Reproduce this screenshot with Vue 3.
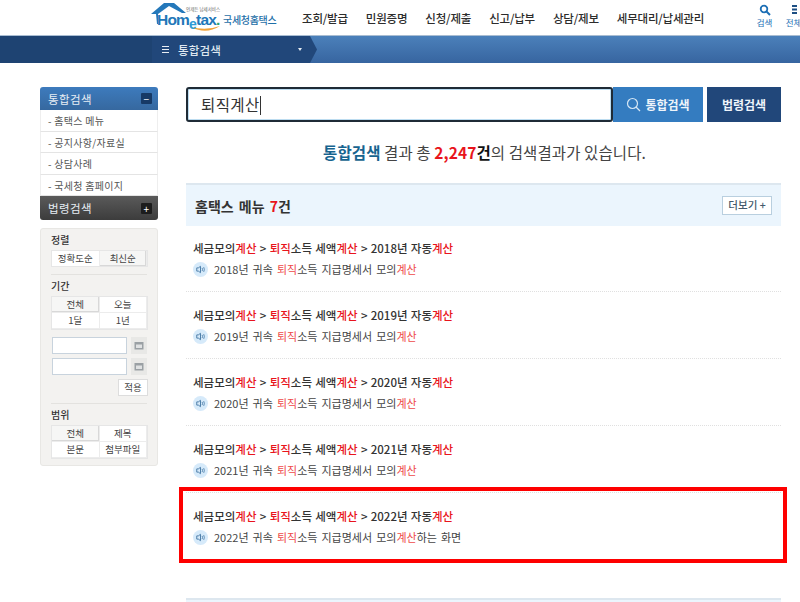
<script setup>
const years = [
  { y: '2018', tail: '' },
  { y: '2019', tail: '' },
  { y: '2020', tail: '' },
  { y: '2021', tail: '' },
  { y: '2022', tail: '하는 화면' }
]
const navs = ['조회/발급', '민원증명', '신청/제출', '신고/납부', '상담/제보', '세무대리/납세관리']
const links = ['- 홈택스 메뉴', '- 공지사항/자료실', '- 상담사례', '- 국세청 홈페이지']
</script>

<template>
  <div class="page">
    <header class="top">
      <div class="logo">
        <svg class="logo-mark" width="94" height="32" viewBox="0 0 94 32">
          <path d="M-1 12 L12 1 L22 1 L34 11 L30 11 L17 4 L6 12 L6 22 L5 22 L4 12 Z" fill="#2478ba" />
          <path d="M39 25 Q54 33 68 24 Q54 29 39 25Z" fill="#f2a33a" />
        </svg>
        <span class="logo-small">언제든 납세서비스</span>
        <span class="logo-word">Hom<i>e</i>tax<b>.</b></span>
        <span class="logo-kr">국세청홈택스</span>
      </div>
      <nav class="gnb">
        <span v-for="n in navs" :key="n">{{ n }}</span>
      </nav>
      <div class="tools">
        <div class="tool">
          <svg width="12" height="12" viewBox="0 0 12 12"><circle cx="5" cy="5" r="3.3" fill="none" stroke="#1d6fb5" stroke-width="1.8" /><path d="M7.5 7.5L11 11" stroke="#1d6fb5" stroke-width="2" /></svg>
          <span>검색</span>
        </div>
        <div class="tool">
          <svg width="12" height="12" viewBox="0 0 12 12"><path d="M4 2h5M4 5.5h5M4 9h5" stroke="#1d4f83" stroke-width="2" /></svg>
          <span>전체</span>
        </div>
      </div>
    </header>

    <div class="bar">
      <div class="crumb">
        <span class="burger"><i></i><i></i><i></i></span>
        <span class="crumb-text">통합검색</span>
        <span class="caret"></span>
      </div>
      <svg class="chevron" width="8" height="27" viewBox="0 0 8 27"><path d="M0 0L7 13.5L0 27Z" fill="#21477a" /></svg>
    </div>

    <div class="body">
      <aside class="side">
        <div class="side-head blue">통합검색<span class="toggle navy">−</span></div>
        <a v-for="l in links" :key="l" class="side-link">{{ l }}</a>
        <div class="side-head dark">법령검색<span class="toggle black">+</span></div>

        <div class="filter">
          <h4>정렬</h4>
          <div class="seg two">
            <span>정확도순</span><span class="on">최신순</span>
          </div>
          <hr />
          <h4>기간</h4>
          <div class="seg">
            <span class="on">전체</span><span>오늘</span><span>1달</span><span>1년</span>
          </div>
          <div class="dates">
            <div class="date-row"><span class="date"></span><span class="cal"><svg width="10" height="9" viewBox="0 0 10 9"><rect x="0.5" y="1" width="9" height="7.5" fill="#9aa0a4" /><rect x="2" y="3.5" width="6" height="3.5" fill="#dfe1e2" /></svg></span></div>
            <div class="date-row"><span class="date"></span><span class="cal"><svg width="10" height="9" viewBox="0 0 10 9"><rect x="0.5" y="1" width="9" height="7.5" fill="#9aa0a4" /><rect x="2" y="3.5" width="6" height="3.5" fill="#dfe1e2" /></svg></span></div>
            <div class="apply-row"><span class="apply">적용</span></div>
          </div>
          <hr />
          <h4>범위</h4>
          <div class="seg">
            <span class="on">전체</span><span>제목</span><span>본문</span><span>첨부파일</span>
          </div>
        </div>
      </aside>

      <main class="main">
        <div class="search">
          <div class="input">퇴직계산<i class="cursor"></i></div>
          <button class="btn blue-btn">
            <svg width="15" height="15" viewBox="0 0 15 15"><circle cx="6.5" cy="6.5" r="5" fill="none" stroke="#d5e6f4" stroke-width="1.2" /><path d="M10 10L14 14" stroke="#d5e6f4" stroke-width="1.2" /></svg>
            통합검색
          </button>
          <button class="btn navy-btn">법령검색</button>
        </div>

        <p class="summary"><b class="teal">통합검색</b> 결과 총 <b class="red">2,247</b><b>건</b>의 검색결과가 있습니다.</p>

        <div class="sec-head">
          <span>홈택스 메뉴 <em>7</em>건</span>
          <span class="more">더보기 +</span>
        </div>

        <div v-for="(r, i) in years" :key="r.y" class="row" :class="{ first: i === 0, marked: i === 4 }">
          <div class="title">세금모의<em>계산</em> &gt; <em>퇴직</em>소득 세액<em>계산</em> &gt; {{ r.y }}년 자동<em>계산</em></div>
          <div class="sub">
            <svg class="speaker" width="15" height="15" viewBox="0 0 14 14"><circle cx="7" cy="7" r="7" fill="#d6eafa" /><path d="M3.5 5.5h1.5l2-1.5v6l-2-1.5H3.5Z" fill="none" stroke="#4a7ca8" stroke-width="0.9" /><path d="M8.5 5.5q.8 1.5 0 3M10 4.8q1.2 2.2 0 4.4" fill="none" stroke="#4a7ca8" stroke-width="0.8" /></svg>
            <span>{{ r.y }}년 귀속 <em>퇴직</em>소득 지급명세서 모의<em>계산</em>{{ r.tail }}</span>
          </div>
        </div>

        <div class="next-sec"></div>
      </main>
    </div>
  </div>
</template>

<style>
html, body { margin: 0; overflow: hidden; background: #fff; }
</style>

<style scoped>
.page {
  width: 800px;
  height: 602px;
  overflow: hidden;
  font-family: "Noto Sans CJK KR", "Noto Sans", sans-serif;
  color: #333;
}
.top {
  height: 36px;
  display: flex;
  align-items: center;
  position: relative;
}
.logo {
  position: relative;
  width: 146px;
  height: 36px;
  margin-left: 152px;
  flex: none;
}
.logo-mark { position: absolute; left: 0; top: 2px; overflow: visible; }
.logo-small {
  position: absolute; left: 34px; top: 6px;
  font-size: 4.5px; line-height: 6px; color: #666; white-space: nowrap;
}
.logo-word {
  position: absolute; left: 5px; top: 12px;
  font: 700 15.5px/16px "Liberation Sans", sans-serif;
  letter-spacing: -0.8px;
  color: #2277b8;
  white-space: nowrap;
}
.logo-word i { font-style: normal; color: #2e9bd6; font-size: 14px; position: relative; top: 4px; }
.logo-word b { color: #2fa36b; }
.logo-kr {
  position: absolute; left: 71px; top: 13px;
  font-size: 10px; line-height: 14px; font-weight: 500;
  letter-spacing: -0.3px;
  color: #1f6fa8;
  white-space: nowrap;
}
.gnb {
  display: flex;
  gap: 18px;
  margin-left: 4px;
  font-size: 11.5px;
  font-weight: 500;
  color: #2c2c2c;
  white-space: nowrap;
  letter-spacing: -0.2px;
}
.tools {
  position: absolute;
  left: 756px;
  top: 4px;
  display: flex;
  gap: 12px;
  white-space: nowrap;
}
.tool {
  width: 17px;
  display: flex;
  flex-direction: column;
  align-items: center;
  font-size: 8.5px;
  line-height: 12px;
  color: #1d6fb5;
}
.bar {
  height: 27px;
  display: flex;
  border-top: 1px solid #a9bdd2;
  margin-top: -1px;
  background: linear-gradient(#4b80ba, #3765a0);
}
.crumb {
  width: 310px;
  height: 27px;
  flex: none;
  display: flex;
  align-items: center;
  padding-left: 162px;
  box-sizing: border-box;
  background: linear-gradient(90deg, #1e4372 152px, #21477a 152px);
  color: #dfe7f0;
  font-size: 11.5px;
  font-weight: 500;
  letter-spacing: 0.2px;
}
.burger { display: flex; flex-direction: column; gap: 2px; width: 7px; margin-right: 9px; }
.burger i { height: 1px; background: #e8edf3; display: block; }
.crumb-text { flex: 1; }
.caret {
  width: 0; height: 0;
  border: 2.5px solid transparent;
  border-top: 3px solid #e4e9f0;
  border-bottom: 0;
  margin-right: 8px;
}
.chevron { flex: none; }
.body {
  display: flex;
  padding: 24px 0 0 40px;
}
.side { width: 118px; flex: none; }
.side-head {
  height: 23px;
  display: flex;
  align-items: center;
  justify-content: space-between;
  padding: 0 6px 0 8px;
  font-size: 11.5px;
  letter-spacing: 0.4px;
  color: #e6edf4;
  box-sizing: border-box;
}
.side-head.blue { background: linear-gradient(#3d7bbd, #36689f); border-radius: 3px 3px 0 0; }
.side-head.dark { background: linear-gradient(#5a5a5a, #3c3c3c); border-radius: 0 0 3px 3px; height: 24px; }
.toggle {
  width: 11px; height: 11px;
  border-radius: 1px;
  font-size: 10px;
  line-height: 11px;
  text-align: center;
  color: #fff;
}
.navy { background: #173a66; }
.black { background: #1c1c1c; }
.side-link {
  display: block;
  height: 21.5px;
  line-height: 22px;
  box-sizing: border-box;
  padding-left: 7px;
  font-size: 10px;
  color: #555;
  letter-spacing: 0.3px;
  border-bottom: 1px solid #e4e4e4;
  border-left: 1px solid #eee;
  border-right: 1px solid #eee;
}
.filter {
  margin-top: 8px;
  height: 238px;
  box-sizing: border-box;
  background: #f3f2f0;
  border: 1px solid #e8e7e4;
  border-radius: 3px;
  padding: 3px 10px 0;
}
h4 {
  margin: 0 0 3px;
  font-size: 10px;
  line-height: 15px;
  font-weight: 500;
  color: #333;
}
hr {
  border: 0;
  border-top: 1px solid #e3e2df;
  margin: 7px 0 3px;
}
.seg {
  display: grid;
  grid-template-columns: 1fr 1fr;
  width: 97px;
  box-sizing: border-box;
  background: #fff;
  border: 1px solid #e6e6e6;
  font-size: 9.5px;
  color: #444;
  text-align: center;
}
.seg span {
  height: 16px;
  line-height: 15px;
  box-sizing: border-box;
  border-right: 1px solid #ececec;
  border-bottom: 1px solid #ececec;
  white-space: nowrap;
}
.seg.two span { height: 15px; line-height: 14px; border-bottom: 0; }
.seg .on { background: #f6f6f5; box-shadow: inset -1px -1px 0 #d8d8d8; }
.dates { display: flex; flex-direction: column; gap: 4px; margin-top: 7px; }
.date-row { display: flex; gap: 4px; margin-left: 1px; }
.date {
  width: 75px; height: 17px;
  box-sizing: border-box;
  background: #fff;
  border: 1px solid #c8d3dd;
  flex: none;
}
.cal {
  width: 16px; height: 17px;
  display: flex; align-items: center; justify-content: center;
  background: #e8e8e6;
}
.apply-row { display: flex; justify-content: flex-end; width: 97px; }
.apply {
  width: 30px; height: 17px;
  box-sizing: border-box;
  background: #fff;
  border: 1px solid #ddd;
  font-size: 9.5px;
  line-height: 15px;
  text-align: center;
  color: #444;
}
.main {
  width: 595px;
  margin-left: 28px;
  flex: none;
}
.search { display: flex; height: 35px; }
.input {
  width: 427px;
  box-sizing: border-box;
  border: 2px solid #1f2b36;
  border-radius: 3px;
  box-shadow: inset 0 0 0 1px #bcdcf0;
  padding-left: 13px;
  font-size: 15.5px;
  line-height: 31px;
  letter-spacing: 0.4px;
  color: #333;
}
.cursor { display: inline-block; width: 1px; height: 19px; background: #333; vertical-align: -4px; }
.btn {
  border: 0;
  font: 700 12px "Noto Sans CJK KR", sans-serif;
  color: #eef4fa;
  height: 35px;
  padding: 0;
}
.blue-btn {
  width: 90px;
  margin-right: 4px;
  background: #347cc0;
  display: flex;
  align-items: center;
  justify-content: center;
  gap: 4px;
}
.navy-btn { width: 74px; background: #21477a; }
.summary {
  margin: 0;
  height: 61px;
  line-height: 61px;
  text-align: center;
  font-size: 15.5px;
  color: #444;
  letter-spacing: 0.1px;
  padding-left: 2px;
  box-sizing: border-box;
}
.summary b { font-weight: 700; color: #111; }
.summary .teal { color: #17648f; }
.summary .red { color: #e8141c; }
.sec-head {
  height: 43px;
  box-sizing: border-box;
  background: #ebf5fd;
  border-top: 2px solid #dde7ef;
  padding: 0 9px 0 9px;
  display: flex;
  align-items: center;
  justify-content: space-between;
  font-size: 14px;
  font-weight: 700;
  word-spacing: 2px;
  color: #333;
}
.sec-head em { font-style: normal; color: #e8141c; }
.more {
  width: 50px; height: 19px;
  box-sizing: border-box;
  background: #fff;
  border: 1px solid #b9cfdf;
  font-size: 10.5px;
  font-weight: 500;
  line-height: 16px;
  text-align: center;
  color: #44596b;
  word-spacing: 0;
}
.row {
  height: 67px;
  box-sizing: border-box;
  padding: 14px 7px 0;
  border-bottom: 1px dotted #e0e0e0;
  position: relative;
}
.row.first { height: 66px; padding-top: 13px; }
.row em { font-style: normal; color: #e8141c; }
.title {
  font-size: 11.5px;
  word-spacing: 0.7px;
  line-height: 18px;
  font-weight: 500;
  color: #333;
  white-space: nowrap;
}
.sub {
  display: flex;
  align-items: center;
  gap: 6px;
  margin-top: 4px;
  font-size: 11px;
  word-spacing: 1.6px;
  line-height: 16px;
  color: #444;
  white-space: nowrap;
}
.sub em { color: #ee4a4a; }
.speaker { flex: none; }
.marked { border-bottom: 0; }
.marked::after {
  content: "";
  position: absolute;
  left: -7px;
  top: -6px;
  width: 608px;
  height: 76px;
  box-sizing: border-box;
  border: 4px solid #fe0000;
}
.next-sec {
  margin-top: 38px;
  height: 6px;
  border-top: 2px solid #dde7ef;
  background: #ebf5fd;
}
</style>
